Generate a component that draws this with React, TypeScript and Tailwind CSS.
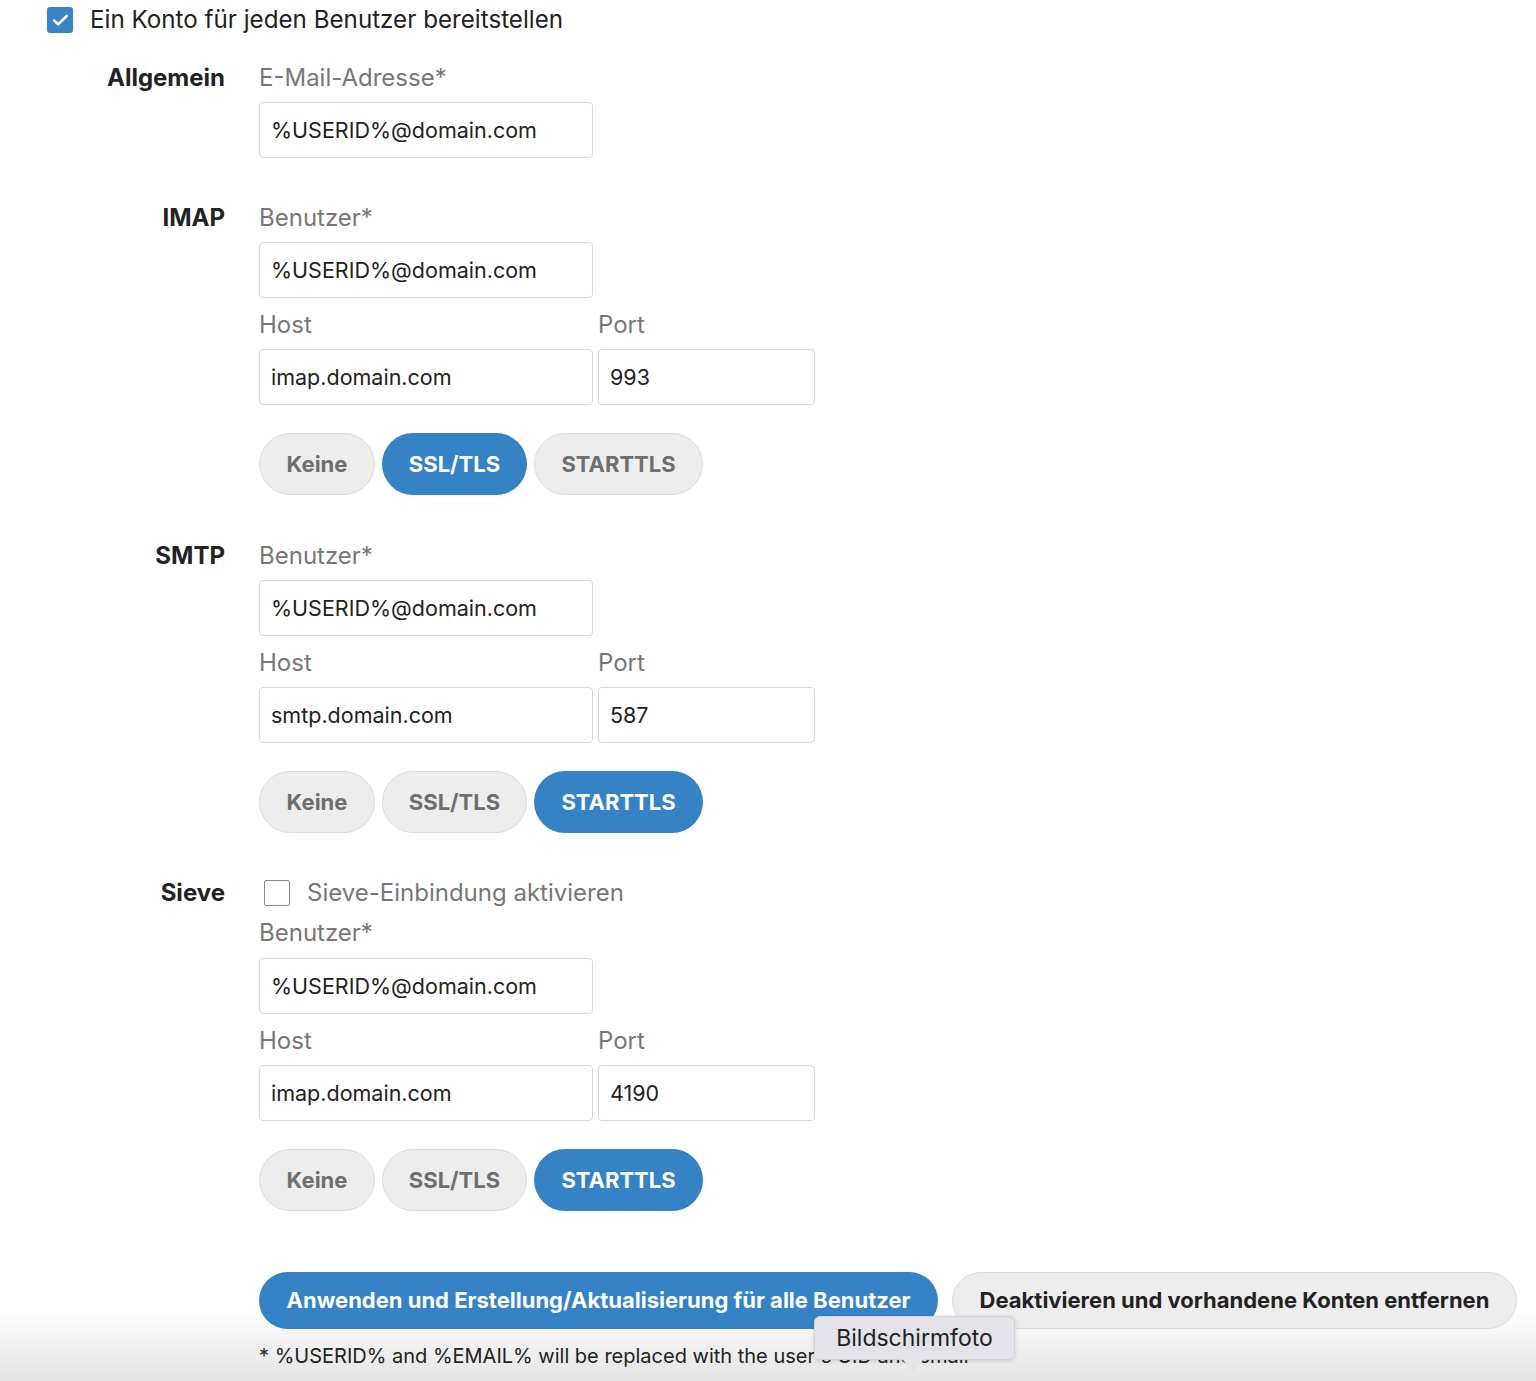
import { Check } from 'lucide-react';

type Mode = 'Keine' | 'SSL/TLS' | 'STARTTLS';

function FieldLabel({ children, tight }: { children: React.ReactNode; tight?: boolean }) {
    return (
        <div className={`${tight ? 'h-[39px] pt-0' : 'h-[51px] pt-[13px]'} text-[24px] leading-[28px] text-[#777]`}>
            {children}
        </div>
    );
}

function TextInput({ value, width = 'w-[334px]' }: { value: string; width?: string }) {
    return (
        <div className={`${width} flex h-[56px] items-center rounded-[4px] border border-[#d9d9d9] bg-white px-[11px] text-[21.5px] text-[#222]`}>
            {value}
        </div>
    );
}

function SecurityButtons({ active }: { active: Mode }) {
    const modes: { name: Mode; w: string }[] = [
        { name: 'Keine', w: 'w-[116px]' },
        { name: 'SSL/TLS', w: 'w-[145px]' },
        { name: 'STARTTLS', w: 'w-[169px]' },
    ];
    return (
        <div className="mt-[28px] flex gap-[7px]">
            {modes.map((m) => (
                <button
                    key={m.name}
                    className={`${m.w} h-[62px] rounded-full text-[22px] font-bold ${
                        m.name === active
                            ? 'bg-[#3583c5] text-white'
                            : 'border border-[#dcdcdc] bg-[#ededed] text-[#6e6e6e]'
                    }`}
                >
                    {m.name}
                </button>
            ))}
        </div>
    );
}

function HostPort({ host, port }: { host: string; port: string }) {
    return (
        <div className="flex gap-[5px]">
            <div className="flex flex-col">
                <FieldLabel>Host</FieldLabel>
                <TextInput value={host} />
            </div>
            <div className="flex flex-col">
                <FieldLabel>Port</FieldLabel>
                <TextInput value={port} width="w-[217px]" />
            </div>
        </div>
    );
}

function Section({ title, children, className = '', labelClass = 'h-[51px] pt-[13px]' }: {
    title: string;
    children: React.ReactNode;
    className?: string;
    labelClass?: string;
}) {
    return (
        <div className={`flex ${className}`}>
            <div className={`w-[259px] shrink-0 pr-[34px] text-right text-[24px] font-bold leading-[28px] text-[#222] ${labelClass}`}>
                {title}
            </div>
            <div className="flex flex-col">{children}</div>
        </div>
    );
}

export default function App() {
    return (
        <div
            className="relative h-[1381px] w-full overflow-hidden bg-[linear-gradient(to_bottom,#ffffff_1308px,#e4e4e4_1381px)] font-['Inter','Liberation_Sans',sans-serif] text-[#222]"
        >
            {/* Top checkbox */}
            <div className="flex h-[40px] items-center pl-[47px]">
                <span className="flex h-[26px] w-[26px] items-center justify-center rounded-[3px] bg-[#3a83c5]">
                    <Check size={19} strokeWidth={3.2} className="text-white" />
                </span>
                <span className="ml-[17px] text-[24.2px] text-[#222]">Ein Konto für jeden Benutzer bereitstellen</span>
            </div>

            <Section title="Allgemein" className="mt-[11px]">
                <FieldLabel>E-Mail-Adresse*</FieldLabel>
                <TextInput value="%USERID%@domain.com" />
            </Section>

            <Section title="IMAP" className="mt-[33px]">
                <FieldLabel>Benutzer*</FieldLabel>
                <TextInput value="%USERID%@domain.com" />
                <HostPort host="imap.domain.com" port="993" />
                <SecurityButtons active="SSL/TLS" />
            </Section>

            <Section title="SMTP" className="mt-[34px]">
                <FieldLabel>Benutzer*</FieldLabel>
                <TextInput value="%USERID%@domain.com" />
                <HostPort host="smtp.domain.com" port="587" />
                <SecurityButtons active="STARTTLS" />
            </Section>

            <Section title="Sieve" className="mt-[34px]" labelClass="h-[52px] flex items-center justify-end">
                <div className="flex h-[52px] items-center">
                    <span className="ml-[5px] h-[26px] w-[26px] rounded-[2px] border-[1.5px] border-[#8a8a8a] bg-white" />
                    <span className="ml-[17px] text-[24px] text-[#777]">Sieve-Einbindung aktivieren</span>
                </div>
                <FieldLabel tight>Benutzer*</FieldLabel>
                <TextInput value="%USERID%@domain.com" />
                <HostPort host="imap.domain.com" port="4190" />
                <SecurityButtons active="STARTTLS" />
            </Section>

            {/* Action buttons */}
            <div className="mt-[61px] flex gap-[14px] pl-[259px]">
                <button className="h-[57px] w-[679px] rounded-full bg-[#3583c5] text-[22px] font-bold text-white">
                    Anwenden und Erstellung/Aktualisierung für alle Benutzer
                </button>
                <button className="h-[57px] w-[565px] rounded-full border border-[#dcdcdc] bg-[#ededed] text-[22px] font-bold text-[#222]">
                    Deaktivieren und vorhandene Konten entfernen
                </button>
            </div>
            <p className="mt-[13px] pl-[259px] text-[20px] leading-[28px] text-[#222]">
                * %USERID% and %EMAIL% will be replaced with the user's UID and email
            </p>

            {/* Screenshot tooltip */}
            <div className="absolute left-[814px] top-[1316px]">
                <div className="flex h-[44px] w-[201px] items-center justify-center rounded-[6px] border border-[#d2d2d8] bg-[#e3e3e9] text-[23px] text-[#222] shadow-[0_1px_4px_rgba(0,0,0,0.15)]">
                    Bildschirmfoto
                </div>
                <svg className="absolute left-[88px] top-[43px]" width="22" height="14" viewBox="0 0 22 14">
                    <path d="M0 0 L11 13 L22 0 Z" fill="#e3e3e9" />
                </svg>
            </div>
        </div>
    );
}
